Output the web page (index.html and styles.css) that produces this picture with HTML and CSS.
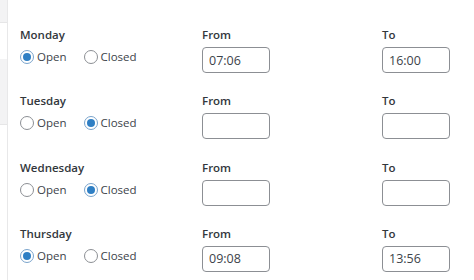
FILE: index.html
```html
<!DOCTYPE html>
<html>
<head>
<meta charset="utf-8">
<link rel="stylesheet" href="styles.css">
</head>
<body>
<div class="page">
  <div class="edge">
    <div class="edge-a"></div>
    <div class="edge-b"></div>
  </div>
  <div class="schedule">
    <div class="row">
      <div class="col">
        <div class="label">Monday</div>
        <div class="radios">
          <label class="radio"><input type="radio" name="mon" checked><span>Open</span></label>
          <label class="radio"><input type="radio" name="mon"><span>Closed</span></label>
        </div>
      </div>
      <div class="col">
        <div class="label">From</div>
        <input class="time" type="text" value="07:06">
      </div>
      <div class="col">
        <div class="label">To</div>
        <input class="time" type="text" value="16:00">
      </div>
    </div>
    <div class="row">
      <div class="col">
        <div class="label">Tuesday</div>
        <div class="radios">
          <label class="radio"><input type="radio" name="tue"><span>Open</span></label>
          <label class="radio"><input type="radio" name="tue" checked><span>Closed</span></label>
        </div>
      </div>
      <div class="col">
        <div class="label">From</div>
        <input class="time" type="text" value="">
      </div>
      <div class="col">
        <div class="label">To</div>
        <input class="time" type="text" value="">
      </div>
    </div>
    <div class="row">
      <div class="col">
        <div class="label">Wednesday</div>
        <div class="radios">
          <label class="radio"><input type="radio" name="wed"><span>Open</span></label>
          <label class="radio"><input type="radio" name="wed" checked><span>Closed</span></label>
        </div>
      </div>
      <div class="col">
        <div class="label">From</div>
        <input class="time" type="text" value="">
      </div>
      <div class="col">
        <div class="label">To</div>
        <input class="time" type="text" value="">
      </div>
    </div>
    <div class="row">
      <div class="col">
        <div class="label">Thursday</div>
        <div class="radios">
          <label class="radio"><input type="radio" name="thu" checked><span>Open</span></label>
          <label class="radio"><input type="radio" name="thu"><span>Closed</span></label>
        </div>
      </div>
      <div class="col">
        <div class="label">From</div>
        <input class="time" type="text" value="09:08">
      </div>
      <div class="col">
        <div class="label">To</div>
        <input class="time" type="text" value="13:56">
      </div>
    </div>
  </div>
</div>
</body>
</html>
```

FILE: styles.css
```css
html, body {
  margin: 0;
  padding: 0;
  background: #ffffff;
}
body {
  font-family: "Open Sans", "Noto Sans", sans-serif;
  font-size: 11.5px;
  color: #3c434a;
  width: 474px;
  height: 280px;
  overflow: hidden;
}
.page {
  display: flex;
  height: 280px;
}
.edge {
  width: 7px;
  border-right: 1px solid #e8e8e9;
  display: flex;
  flex-direction: column;
  flex-shrink: 0;
}
.edge-a {
  height: 22px;
  background: #f3f3f4;
  border-bottom: 1px solid #e6e6e7;
  margin-bottom: 36px;
}
.edge-b {
  height: 65px;
  background: #f3f3f4;
  border-bottom: 1px solid #e6e6e7;
}
.schedule {
  padding: 26px 0 0 12px;
  display: flex;
  flex-direction: column;
  row-gap: 19.3px;
}
.row {
  display: grid;
  grid-template-columns: 182px 180px 90px;
}
.col {
  display: flex;
  flex-direction: column;
  align-items: flex-start;
}
.label {
  font-weight: 600;
  line-height: 17px;
  height: 17px;
  margin-bottom: 4px;
  color: #32373c;
}
.radios {
  display: flex;
  align-items: center;
  height: 20px;
  gap: 17px;
}
.radio {
  display: flex;
  align-items: center;
  gap: 3px;
  line-height: 20px;
  color: #3c434a;
}
.radio input {
  -webkit-appearance: none;
  appearance: none;
  margin: 0;
  width: 14px;
  height: 14px;
  border: 1px solid #8c8f94;
  border-radius: 50%;
  background: #fff;
  display: flex;
  align-items: center;
  justify-content: center;
  box-sizing: border-box;
}
.radio input:checked {
  border-color: #7aa4cc;
}
.radio input:checked::before {
  content: "";
  width: 8px;
  height: 8px;
  border-radius: 50%;
  background: #2f7fc4;
}
.time {
  box-sizing: border-box;
  width: 68px;
  height: 26px;
  border: 1px solid #8c8f94;
  border-radius: 4px;
  padding: 0 6px;
  margin: 0;
  font-family: "Open Sans", "Noto Sans", sans-serif;
  font-size: 12.5px;
  color: #3c434a;
  background: #fff;
  outline: none;
}
```
